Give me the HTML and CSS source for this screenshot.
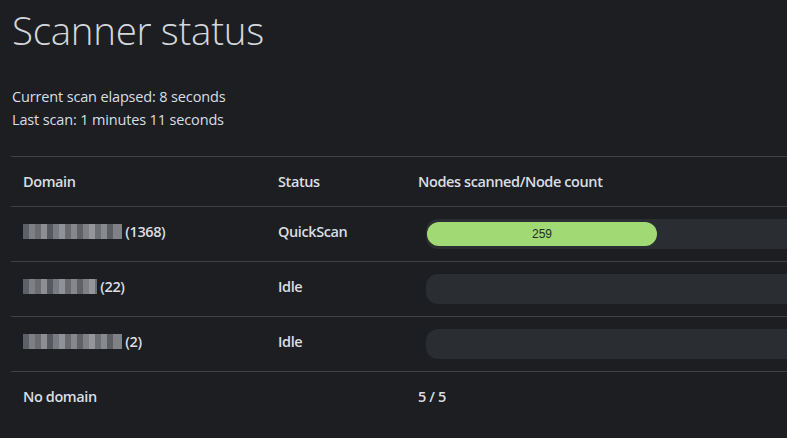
FILE: index.html
```html
<!DOCTYPE html>
<html lang="en">
<head>
<meta charset="utf-8">
<title>Scanner status</title>
<link rel="stylesheet" href="styles.css">
</head>
<body>
<main class="page">
  <h1 class="title">Scanner status</h1>
  <div class="info">
    <p>Current scan elapsed: 8 seconds</p>
    <p>Last scan: 1 minutes 11 seconds</p>
  </div>
  <table class="scan-table">
    <thead>
      <tr>
        <th class="col-domain">Domain</th>
        <th class="col-status">Status</th>
        <th class="col-nodes">Nodes scanned/Node count</th>
      </tr>
    </thead>
    <tbody>
      <tr>
        <td><span class="redact redact-a"></span> (1368)</td>
        <td>QuickScan</td>
        <td><div class="track"><div class="fill" style="width:230px">259</div></div></td>
      </tr>
      <tr>
        <td><span class="redact redact-b"></span> (22)</td>
        <td>Idle</td>
        <td><div class="track"></div></td>
      </tr>
      <tr>
        <td><span class="redact redact-c"></span> (2)</td>
        <td>Idle</td>
        <td><div class="track"></div></td>
      </tr>
      <tr class="last">
        <td>No domain</td>
        <td></td>
        <td class="count">5 / 5</td>
      </tr>
    </tbody>
  </table>
</main>
</body>
</html>
```

FILE: styles.css
```css
html, body {
  margin: 0;
  padding: 0;
  background: #1c1e22;
  overflow: hidden;
}

body {
  font-family: "Open Sans", "Noto Sans", sans-serif;
  color: #d9dee4;
}

.page {
  padding: 0 0 0 11px;
  width: 1100px;
}

.title {
  margin: 0;
  padding: 5px 0 0 1px;
  font-size: 38.5px;
  line-height: 50px;
  font-weight: 300;
  color: #d3d7db;
  letter-spacing: -0.3px;
}

.info {
  margin-top: 30px;
  padding-left: 1px;
}

.info p {
  margin: 0;
  font-size: 14.5px;
  line-height: 23px;
  letter-spacing: -0.15px;
}

.scan-table {
  margin-top: 25px;
  width: 1050px;
  border-collapse: collapse;
  border-top: 1px solid #3e4145;
}

.scan-table th,
.scan-table td {
  text-align: left;
  padding: 0 12px;
  font-size: 14.5px;
  font-weight: 600;
  letter-spacing: -0.4px;
  vertical-align: middle;
}

.scan-table th {
  height: 49px;
  border-bottom: 1px solid #3e4145;
}

.scan-table td {
  height: 49px;
  padding-bottom: 5px;
  border-bottom: 1px solid #3e4145;
}

.scan-table tr.last td {
  border-bottom: none;
}

.col-domain { width: 231px; }
.col-status { width: 116px; }

.redact {
  display: inline-block;
  vertical-align: -2px;
  height: 15px;
  background:
    linear-gradient(90deg,
      #5d6066 0 6px, #7d7f84 6px 12px, #6a6c71 12px 18px, #8c8e92 18px 24px,
      #56595f 24px 30px, #7a7c81 30px 36px, #909296 36px 42px, #686a6f 42px 48px,
      #85878b 48px 54px, #5f6167 54px 60px, #7e8085 60px 66px, #94969a 66px 72px,
      #6d6f74 72px 78px, #888a8e 78px 84px, #5b5e63 84px 90px, #7f8186 90px 100px);
}

.redact-a { width: 99px; }
.redact-b { width: 74px; }
.redact-c { width: 99px; }

.track {
  margin: 5px 0 0 8px;
  height: 30px;
  border-radius: 12px 0 0 12px;
  background: #2a2e33;
  display: flex;
  align-items: center;
  padding-left: 1px;
}

.fill {
  height: 24px;
  border-radius: 12px;
  background: #a1d974;
  color: #23282a;
  font-family: "Liberation Sans", Arial, sans-serif;
  font-weight: 400;
  font-size: 12px;
  letter-spacing: 0;
  display: flex;
  align-items: center;
  justify-content: center;
}

.count {
  letter-spacing: 0;
}
```
